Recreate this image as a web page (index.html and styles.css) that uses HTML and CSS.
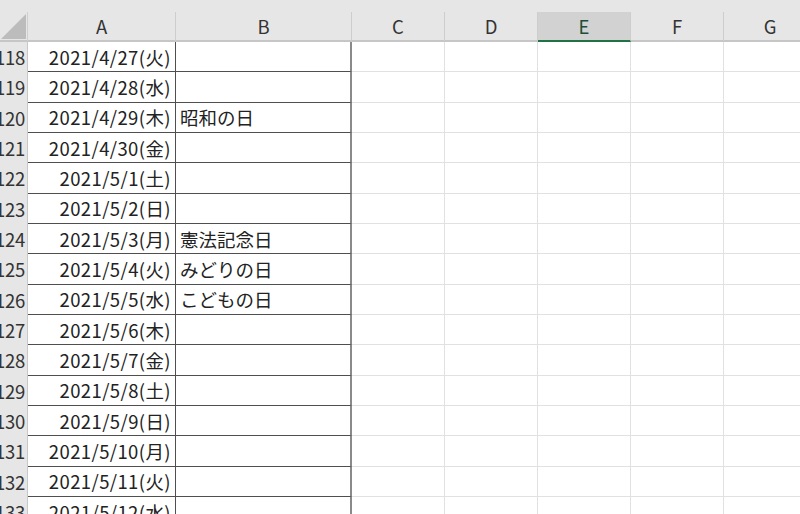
FILE: index.html
```html
<!DOCTYPE html>
<html lang="ja">
<head>
<meta charset="utf-8">
<title>Sheet</title>
<link rel="stylesheet" href="styles.css">
</head>
<body>
<div class="top"></div>
<div class="grid">
  <div class="corner"><svg class="tri" width="27" height="28" viewBox="0 0 27 28"><polygon points="1,27 26,27 26,2" fill="#bcbcbc"/></svg></div>
  <div class="ch">A</div><div class="ch">B</div><div class="ch">C</div><div class="ch">D</div><div class="ch sel">E</div><div class="ch">F</div><div class="ch">G</div>

  <div class="rh"><span>118</span></div><div class="c a">2021/4/27(火)</div><div class="c b"></div><div class="c"></div><div class="c"></div><div class="c"></div><div class="c"></div><div class="c"></div>
  <div class="rh"><span>119</span></div><div class="c a">2021/4/28(水)</div><div class="c b"></div><div class="c"></div><div class="c"></div><div class="c"></div><div class="c"></div><div class="c"></div>
  <div class="rh"><span>120</span></div><div class="c a">2021/4/29(木)</div><div class="c b">昭和の日</div><div class="c"></div><div class="c"></div><div class="c"></div><div class="c"></div><div class="c"></div>
  <div class="rh"><span>121</span></div><div class="c a">2021/4/30(金)</div><div class="c b"></div><div class="c"></div><div class="c"></div><div class="c"></div><div class="c"></div><div class="c"></div>
  <div class="rh"><span>122</span></div><div class="c a">2021/5/1(土)</div><div class="c b"></div><div class="c"></div><div class="c"></div><div class="c"></div><div class="c"></div><div class="c"></div>
  <div class="rh"><span>123</span></div><div class="c a">2021/5/2(日)</div><div class="c b"></div><div class="c"></div><div class="c"></div><div class="c"></div><div class="c"></div><div class="c"></div>
  <div class="rh"><span>124</span></div><div class="c a">2021/5/3(月)</div><div class="c b">憲法記念日</div><div class="c"></div><div class="c"></div><div class="c"></div><div class="c"></div><div class="c"></div>
  <div class="rh"><span>125</span></div><div class="c a">2021/5/4(火)</div><div class="c b">みどりの日</div><div class="c"></div><div class="c"></div><div class="c"></div><div class="c"></div><div class="c"></div>
  <div class="rh"><span>126</span></div><div class="c a">2021/5/5(水)</div><div class="c b">こどもの日</div><div class="c"></div><div class="c"></div><div class="c"></div><div class="c"></div><div class="c"></div>
  <div class="rh"><span>127</span></div><div class="c a">2021/5/6(木)</div><div class="c b"></div><div class="c"></div><div class="c"></div><div class="c"></div><div class="c"></div><div class="c"></div>
  <div class="rh"><span>128</span></div><div class="c a">2021/5/7(金)</div><div class="c b"></div><div class="c"></div><div class="c"></div><div class="c"></div><div class="c"></div><div class="c"></div>
  <div class="rh"><span>129</span></div><div class="c a">2021/5/8(土)</div><div class="c b"></div><div class="c"></div><div class="c"></div><div class="c"></div><div class="c"></div><div class="c"></div>
  <div class="rh"><span>130</span></div><div class="c a">2021/5/9(日)</div><div class="c b"></div><div class="c"></div><div class="c"></div><div class="c"></div><div class="c"></div><div class="c"></div>
  <div class="rh"><span>131</span></div><div class="c a">2021/5/10(月)</div><div class="c b"></div><div class="c"></div><div class="c"></div><div class="c"></div><div class="c"></div><div class="c"></div>
  <div class="rh"><span>132</span></div><div class="c a">2021/5/11(火)</div><div class="c b"></div><div class="c"></div><div class="c"></div><div class="c"></div><div class="c"></div><div class="c"></div>
  <div class="rh"><span>133</span></div><div class="c a">2021/5/12(水)</div><div class="c b"></div><div class="c"></div><div class="c"></div><div class="c"></div><div class="c"></div><div class="c"></div>
</div>
</body>
</html>
```
FILE: styles.css
```css
html, body {
  margin: 0;
  padding: 0;
  width: 800px;
  height: 514px;
  overflow: hidden;
  background: #ffffff;
  font-family: "Noto Sans CJK JP", "Noto Sans", sans-serif;
  font-size: 18.5px;
  color: #222222;
}
.top {
  height: 12px;
  background: #e6e6e6;
}
.grid {
  display: grid;
  grid-template-columns: 28px 148px 176px 93px 93px 93px 93px 93px;
  grid-template-rows: 30px repeat(16, 30.333px);
  width: 817px;
}
.grid > div {
  box-sizing: border-box;
  overflow: hidden;
  white-space: nowrap;
}
.corner {
  background: #e6e6e6;
  border-bottom: 2px solid #c6c6c6;
  border-right: 1px solid #cfcfcf;
  display: flex;
  align-items: flex-end;
  justify-content: flex-start;
}
.tri {
  display: block;
  flex: none;
}
.ch {
  background: #e6e6e6;
  border-bottom: 2px solid #c6c6c6;
  border-right: 1px solid #cdcdcd;
  display: flex;
  align-items: center;
  justify-content: center;
  color: #333333;
}
.ch.sel {
  background: #d2d2d2;
  border-bottom-color: #217346;
  color: #1f4e34;
}
.rh {
  background: #e6e6e6;
  border-right: 1px solid #c8c8c8;
  display: flex;
  align-items: center;
  justify-content: flex-end;
  padding-right: 2px;
  color: #333333;
  letter-spacing: -0.3px;
}
.c {
  border-right: 1px solid #e1e1e1;
  border-bottom: 1px solid #e1e1e1;
  display: flex;
  align-items: center;
}
.c.a {
  border-right: 1px solid #4f4f4f;
  border-bottom: 1px solid #4f4f4f;
  justify-content: flex-end;
  padding-right: 4px;
  letter-spacing: 0.4px;
}
.c.b {
  border-right: 2px solid #8a8a8a;
  border-bottom: 1px solid #4f4f4f;
  padding-left: 4px;
}
```
